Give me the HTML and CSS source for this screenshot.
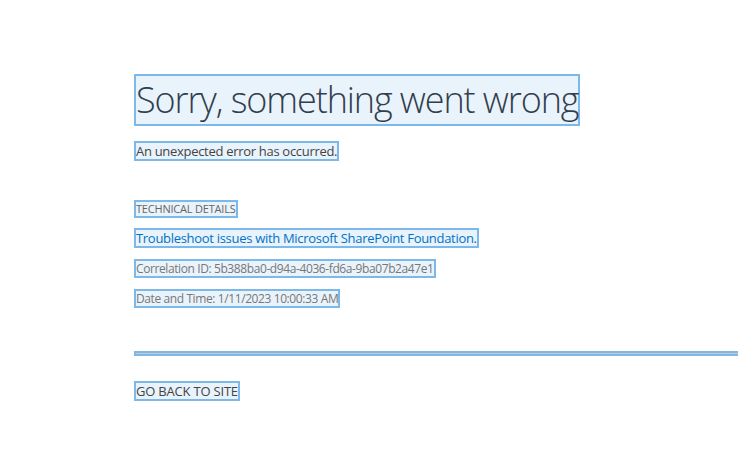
FILE: index.html
```html
<!DOCTYPE html>
<html lang="en">
<head>
    <meta charset="UTF-8">
    <meta name="viewport" content="width=device-width, initial-scale=1.0">
    <title>Error</title>
    <link rel="stylesheet" href="styles.css">
</head>

<body>
    <div class="page">
        <h1 class="title hl">Sorry, something went wrong</h1>
        <p class="message hl">An unexpected error has occurred.</p>

        <div class="details">
            <div class="details-title hl">TECHNICAL DETAILS</div>
            <a class="help hl" href="#">Troubleshoot issues with Microsoft SharePoint Foundation.</a>
            <div class="info hl">Correlation ID: 5b388ba0-d94a-4036-fd6a-9ba07b2a47e1</div>
            <div class="info date hl">Date and Time: 1/11/2023 10:00:33 AM</div>
        </div>

        <div class="rule"></div>

        <a class="back hl" href="#">GO BACK TO SITE</a>
    </div>
</body>

</html>
```

FILE: styles.css
```css
* {
    margin: 0;
    padding: 0;
    box-sizing: border-box;
    font-family: 'Open Sans', sans-serif;
}

body {
    background: #ffffff;
    color: #444444;
}

.page {
    padding: 74px 0 0 134px;
}

.hl {
    display: table;
    border: 2px solid #7db8ea;
    background: #e9f3fc;
}

.title {
    font-size: 36px;
    font-weight: 300;
    line-height: 48px;
    color: #333e4c;
    letter-spacing: -1.1px;
}

.message {
    margin-top: 15px;
    font-size: 13px;
    line-height: 16px;
    color: #444444;
    letter-spacing: -0.3px;
}

.details {
    margin-top: 39px;
}

.details-title {
    font-size: 11px;
    line-height: 14px;
    color: #666666;
    letter-spacing: -0.2px;
}

.help {
    margin-top: 10px;
    font-size: 13px;
    line-height: 16px;
    color: #0072c6;
    text-decoration: none;
    letter-spacing: -0.3px;
}

.info {
    margin-top: 11px;
    font-size: 12px;
    line-height: 15px;
    color: #777777;
    letter-spacing: -0.4px;
}

.rule {
    margin-top: 43px;
    height: 5px;
    border: 2px solid #7db8ea;
    border-right: none;
    background: #c8c8c8;
}

.back {
    margin-top: 25px;
    font-size: 13px;
    line-height: 16px;
    color: #444444;
    text-decoration: none;
    letter-spacing: -0.2px;
}
```
